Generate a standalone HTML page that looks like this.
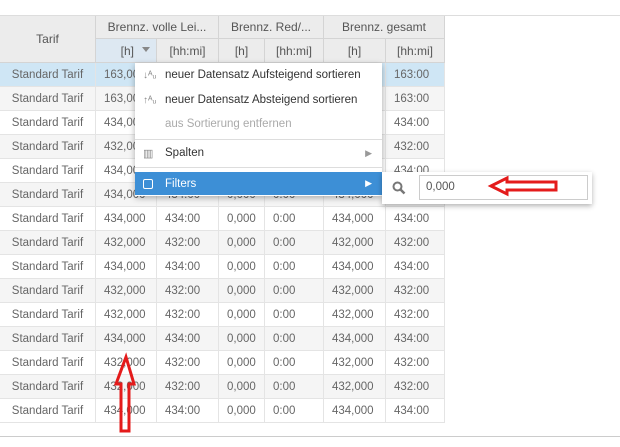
<!DOCTYPE html>
<html><head><style>
*{box-sizing:border-box;margin:0;padding:0}
body{width:620px;height:447px;background:#fff;font-family:"Liberation Sans",sans-serif;font-size:11.5px;color:#666;position:relative;overflow:hidden}
.c{position:absolute;display:flex;align-items:center;justify-content:flex-start;padding-left:8px;border-right:1px solid #e4e4e4;border-bottom:1px solid #e4e4e4;white-space:nowrap}
.h{background:#ececec;border-color:#d4d4d4;color:#555;font-size:12px;justify-content:center;padding-left:0}
.menu{position:absolute;left:135px;top:63px;width:247px;height:133px;background:#fff;box-shadow:0 2px 6px rgba(0,0,0,.3);font-size:11.5px;color:#333}
.mi{position:absolute;left:0;width:247px;height:24px;display:flex;align-items:center;padding-left:30px}
.ic{position:absolute;left:8px;font-size:10px;color:#888}
</style></head><body>
<div style="position:absolute;left:0;top:15px;width:620px;border-top:1px solid #ddd"></div>
<div style="position:absolute;left:0;top:436px;width:620px;border-top:1px solid #ccc"></div>
<div id="g"></div>
<div class="menu">
 <div class="mi" style="top:0"><span class="ic">↓ᴬᵤ</span>neuer Datensatz Aufsteigend sortieren</div>
 <div class="mi" style="top:25px"><span class="ic">↑ᴬᵤ</span>neuer Datensatz Absteigend sortieren</div>
 <div class="mi" style="top:49px;color:#aaa">aus Sortierung entfernen</div>
 <div style="position:absolute;top:76px;left:0;width:247px;border-top:1px solid #ddd"></div>
 <div class="mi" style="top:78px"><span class="ic" style="font-size:11px">▥</span>Spalten<span style="position:absolute;right:10px;color:#999;font-size:9px">▶</span></div>
 <div style="position:absolute;top:104px;left:0;width:247px;border-top:1px solid #ddd"></div>
 <div class="mi" style="top:109px;height:23px;background:#3d8fd6;color:#fff"><span style="position:absolute;left:8px;width:10px;height:10px;border:1.5px solid #fff;border-radius:2px"></span>Filters<span style="position:absolute;right:10px;font-size:9px">▶</span></div>
</div>
<div style="position:absolute;left:382px;top:172px;width:210px;height:32px;background:#fff;box-shadow:0 2px 5px rgba(0,0,0,.3)">
 <svg style="position:absolute;left:10px;top:9px" width="14" height="14" viewBox="0 0 14 14"><circle cx="5.5" cy="5.5" r="4" fill="none" stroke="#777" stroke-width="2"/><line x1="8.5" y1="8.5" x2="12.5" y2="12.5" stroke="#777" stroke-width="2.5"/></svg>
 <div style="position:absolute;left:37px;top:3px;width:169px;height:25px;border:1px solid #ccc;padding-left:6px;line-height:23px;font-size:11.5px;color:#555">0,000</div>
</div>
<svg style="position:absolute;left:0;top:0" width="620" height="447">
 <polygon points="491,186 507,178 507,182 556,182 556,190 507,190 507,194" fill="none" stroke="#e41b1b" stroke-width="3"/>
 <polygon points="126,357 134,384 129,384 129,431 121,431 121,384 116,384" fill="none" stroke="#e41b1b" stroke-width="3"/>
</svg>
<script>
var cols=[0,96,157,219,265,324,386,445];
var g=document.getElementById('g'),h='';
function cell(x,y,w,ht,t,cls,st){h+='<div class="c '+(cls||'')+'" style="left:'+x+'px;top:'+y+'px;width:'+w+'px;height:'+ht+'px;'+(st||'')+'">'+t+'</div>';}
cell(0,16,96,47,'Tarif','h');
cell(96,16,123,23,'Brennz. volle Lei...','h');
cell(219,16,105,23,'Brennz. Red/...','h');
cell(324,16,121,23,'Brennz. gesamt','h');
var sub=['[h]','[hh:mi]','[h]','[hh:mi]','[h]','[hh:mi]'];
for(var i=0;i<6;i++)cell(cols[i+1],39,cols[i+2]-cols[i+1],24,sub[i],'h',i==0?'background:#dde8f2;justify-content:flex-end;padding-right:22px':'');
h+='<div style="position:absolute;left:142px;top:47px;border-left:4px solid transparent;border-right:4px solid transparent;border-top:5px solid #888"></div>';
var v=[163,163,434,432,434,434,434,432,434,432,432,434,432,432,434];
for(var r=0;r<15;r++){var y=63+r*24,n=v[r];
 var bg=r==0?'background:#cfe6f5;':(r%2==1?'background:#f5f5f5;':'');
 var t=['Standard Tarif',n+',000',n+':00','0,000','0:00',n+',000',n+':00'];
 for(var c=0;c<7;c++)cell(cols[c],y,cols[c+1]-cols[c],24,t[c],'',bg+(c==0?'padding-left:0;justify-content:center;':''));}
g.innerHTML=h;
</script>
</body></html>
